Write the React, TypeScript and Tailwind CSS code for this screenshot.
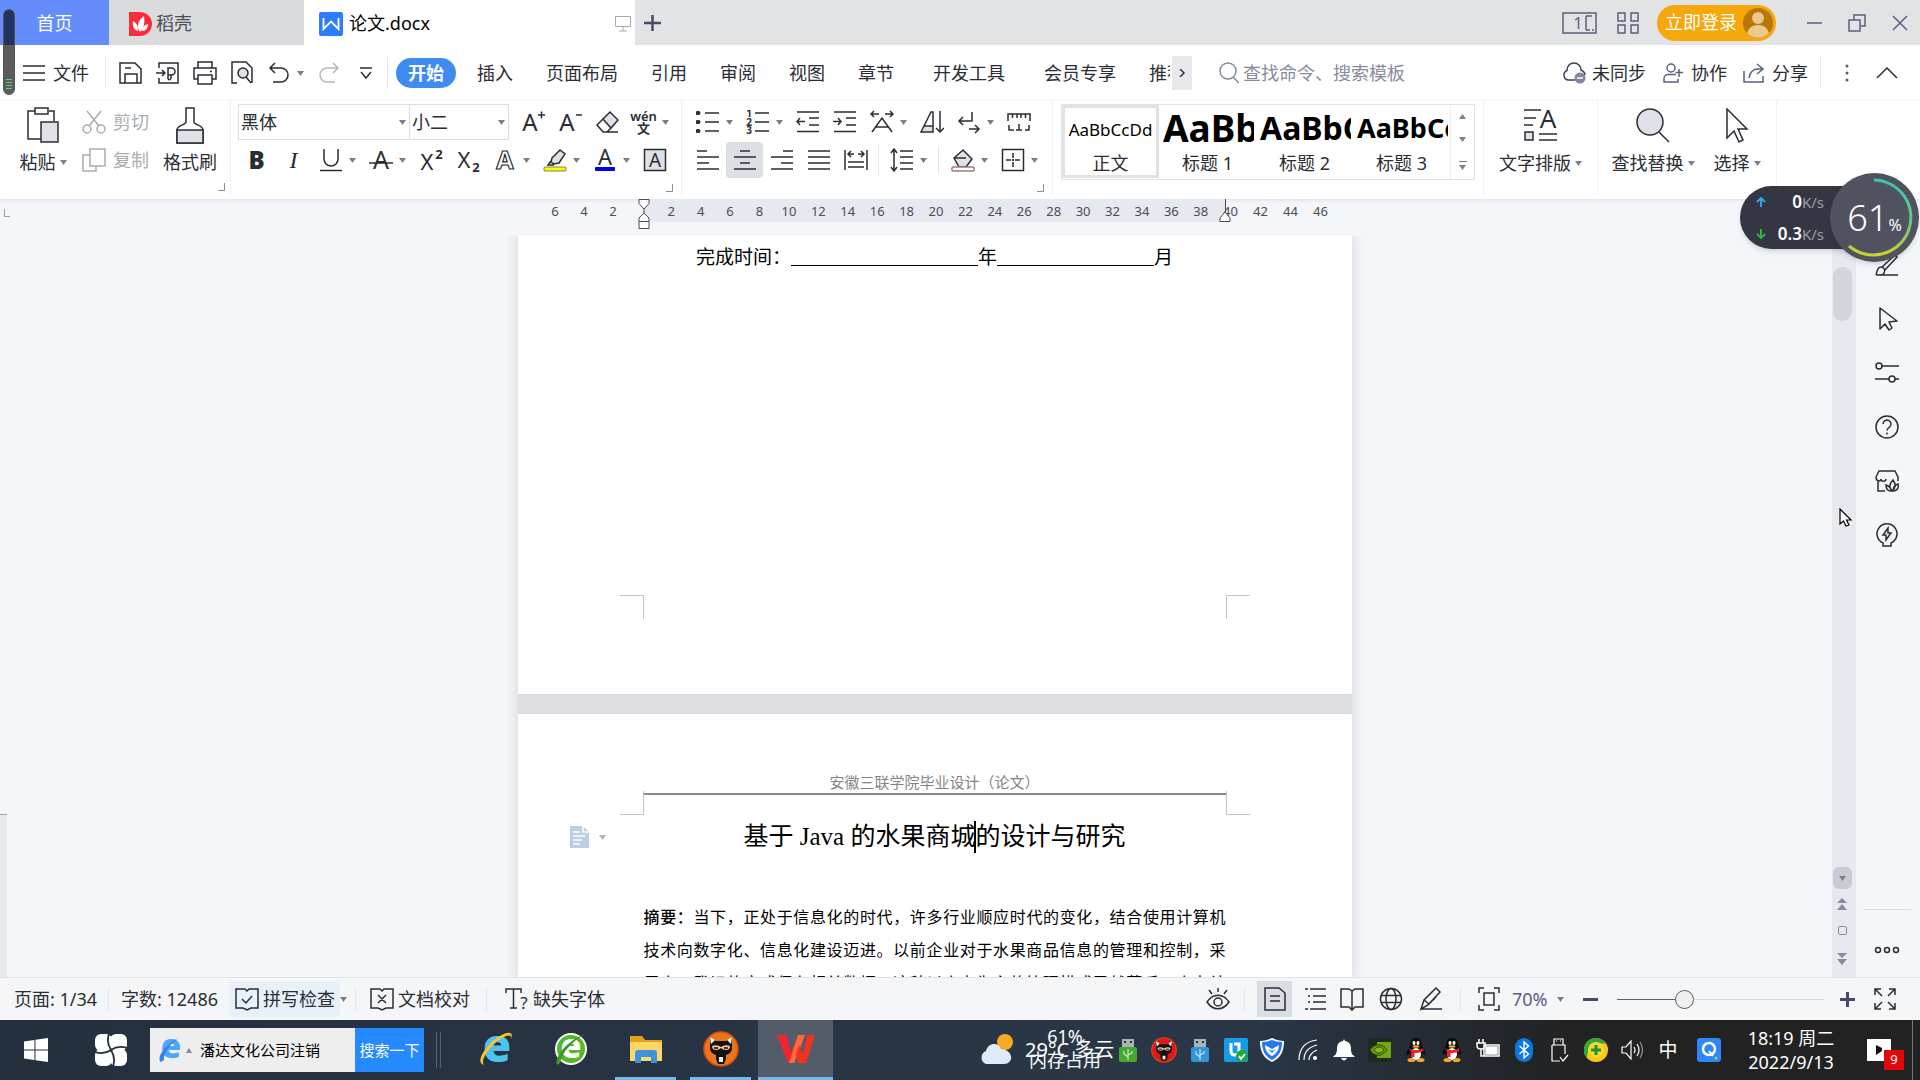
import React from 'react';

interface IcoProps {
  w?: number;
  h?: number;
  vb?: string;
  className?: string;
  sw?: number;
  children: React.ReactNode;
}

function Ico({ w = 24, h = 24, vb, className = '', sw = 1.5, children }: IcoProps) {
  return (
    <svg
      width={w}
      height={h}
      viewBox={vb || `0 0 ${w} ${h}`}
      className={`shrink-0 ${className}`}
      fill="none"
      stroke="currentColor"
      strokeWidth={sw}
      aria-hidden="true"
    >
      {children}
    </svg>
  );
}

function Caret({ className = '' }: { className?: string }) {
  return (
    <svg width="7" height="5" viewBox="0 0 7 5" className={`shrink-0 fill-[#7c7f87] ${className}`} aria-hidden="true">
      <path d="M0 0h7L3.500 5z" />
    </svg>
  );
}

function Tool({ label, active, drop, children }: { label: string; active?: boolean; drop?: boolean; children: React.ReactNode }) {
  return (
    <>
      <button
        aria-label={label}
        className={`flex h-9 w-[37px] shrink-0 items-center justify-center rounded-sm ${active ? 'bg-[#dcdfe6]' : ''}`}
      >
        {children}
      </button>
      {drop && (
        <button aria-label={`${label} 更多`} className="flex h-9 w-[13px] shrink-0 items-center">
          <Caret />
        </button>
      )}
    </>
  );
}

function Letter({ x = 12, y = 20, size = 22, weight = 400, fill = 'currentColor', children }: { x?: number; y?: number; size?: number; weight?: number; fill?: string; children: string }) {
  return (
    <text x={x} y={y} fontSize={size} fontWeight={weight} textAnchor="middle" fill={fill} stroke="none">
      {children}
    </text>
  );
}

function Divider({ className = '' }: { className?: string }) {
  return <div className={`w-px shrink-0 bg-[#e6e7ea] ${className}`} />;
}

function Launcher() {
  return (
    <Ico w={8} h={8} sw={1} className="self-end text-[#8a8d94]">
      <path d="M7.500 0v7.500H1" />
    </Ico>
  );
}

function TitleBar() {
  return (
    <header className="flex h-[45px] shrink-0 items-stretch bg-[#e1e3e5]">
      <button className="w-[109px] bg-[#648dfb] pt-0.5 text-white">首页</button>
      <button className="flex w-[195px] items-center gap-1 bg-[#dadbde] pl-5 pt-0.5 text-[#4b4e57]">
        <svg width="23" height="24" viewBox="0 0 23 24" aria-hidden="true">
          <path d="M0 0h11a12 12 0 0 1 0 24H0z" fill="#fb2b3a" />
          <path d="M11 20C7 15 9 8 15 4c1 7 0 12-4 16zM9 19c-4-1-6-5-5-10 4 2 5 5 5 10zM13 19c0-3 2-6 6-7 0 4-2 7-6 7z" fill="#fff" />
        </svg>
        稻壳
      </button>
      <div className="flex w-[331px] items-center bg-white pl-[15px] pr-1 pt-0.5">
        <svg width="24" height="24" viewBox="0 0 24 24" aria-hidden="true">
          <rect width="24" height="24" rx="2" fill="#2f7df6" />
          <path d="M4.500 6v11L12 9.500 19.500 17V6" fill="none" stroke="#fff" strokeWidth="1.800" />
        </svg>
        <button className="ml-1.5 flex-1 text-left text-black">论文.docx</button>
        <Ico w={16} h={17} sw={1} className="text-[#a5a9b3]">
          <path d="M.5 1.500h15v10H.5zM8 11.500V16M4 16h8" />
        </Ico>
      </div>
      <button aria-label="新建" className="flex w-[35px] items-center justify-center text-[#454d66]">
        <Ico w={17} h={18} sw={2.500}>
          <path d="M8.500 1v16M0 9h17" />
        </Ico>
      </button>
      <div className="flex flex-1 items-center justify-end text-[#5a6080]">
        <button aria-label="窗口" className="mr-5">
          <Ico w={35} h={22} sw={1.500}>
            <path d="M1 1h33v20H1zM24 4v14M24 4h6M24 18h4M30 18h2" />
            <Letter x={16} y={17} size={16}>1</Letter>
          </Ico>
        </button>
        <button aria-label="应用" className="mr-[18px]">
          <Ico w={22} h={22}>
            <path d="M1 1h7v8H1zM14 1h7v8h-7zM1 13h7v8H1zM14 13h7v8h-7z" />
          </Ico>
        </button>
        <button className="flex h-9 w-[119px] items-center justify-between rounded-full bg-[#f5a70c] pl-2 pr-[3px] text-white">
          立即登录
          <svg width="30" height="30" viewBox="0 0 30 30" aria-hidden="true">
            <circle cx="15" cy="15" r="15" fill="#b97708" />
            <circle cx="15" cy="10" r="6" fill="#ecc88c" />
            <path d="M4 25c2-6 6-8 11-8s9 2 11 8a15 15 0 0 1-22 0z" fill="#ecc88c" />
          </svg>
        </button>
        <Divider className="ml-3 h-7" />
        <button aria-label="最小化" className="ml-[18px]">
          <Ico w={15} h={18}><path d="M0 9h15" /></Ico>
        </button>
        <button aria-label="还原" className="ml-[26px]">
          <Ico w={18} h={18}><path d="M1 6h11v11H1zM6 6V1h11v11h-5" /></Ico>
        </button>
        <button aria-label="关闭" className="ml-[26px] mr-3">
          <Ico w={16} h={16}><path d="M1 1l14 14M15 1L1 15" /></Ico>
        </button>
      </div>
    </header>
  );
}

function MenuBar() {
  return (
    <nav className="flex h-14 shrink-0 items-center bg-white pl-[23px]">
      <button className="flex items-center gap-2">
        <Ico w={22} h={16}><path d="M0 1h22M0 8h22M0 15h22" /></Ico>
        文件
      </button>
      <Divider className="ml-4 mr-1.5 h-8" />
      <Tool label="保存">
        <Ico><path d="M1 2h15l6 6v14H1zM6 22v-9h12v9M6 7h6" /></Ico>
      </Tool>
      <Tool label="输出为PDF">
        <Ico><path d="M3 7V2h19v20H3v-5M0 12h9M6 9l3 3-3 3M12 18V7h3.500a3.500 3.500 0 0 1 0 7H12M12 18c2 2 4-1 3-4" /></Ico>
      </Tool>
      <Tool label="打印">
        <Ico><path d="M5 7V1h14v6M5 18H1V7h22v11h-4M5 14h14v9H5zM17 10.500h2" /></Ico>
      </Tool>
      <Tool label="打印预览">
        <Ico>
          <path d="M7 22H2V1h14l6 6v15" />
          <circle cx="13" cy="12" r="5" fill="#dfe1e6" />
          <path d="M16 16l5 6" />
        </Ico>
      </Tool>
      <Tool label="撤销" drop>
        <Ico><path d="M8 2L3 7l5 5M3 7h11a7 7 0 0 1 0 14H6" /></Ico>
      </Tool>
      <div className="flex text-[#b4b7bd]">
        <Tool label="恢复">
          <Ico><path d="M16 2l5 5-5 5M21 7H10a7 7 0 0 0 0 14h8" /></Ico>
        </Tool>
      </div>
      <Tool label="自定义">
        <Ico w={12} h={12}><path d="M0 1h12M1 5l5 6 5-6" /></Ico>
      </Tool>
      <Divider className="ml-[3px] h-8" />
      <button className="ml-2 h-[30px] w-[60px] shrink-0 rounded-full bg-[#3f8cf0] font-bold text-white">开始</button>
      <div className="ml-[21px] flex shrink-0 gap-[33px] whitespace-nowrap">
        <button>插入</button>
        <button>页面布局</button>
        <button>引用</button>
        <button>审阅</button>
        <button>视图</button>
        <button>章节</button>
        <button className="mx-1.5">开发工具</button>
        <button>会员专享</button>
        <button className="w-[21px] overflow-hidden text-left">推荐</button>
      </div>
      <button aria-label="更多选项卡" className="ml-0.5 flex h-[34px] w-5 shrink-0 items-center justify-center bg-[#e8e9ec]">
        <Ico w={6} h={8}><path d="M1 0l4 4-4 4" /></Ico>
      </button>
      <label className="ml-[27px] flex shrink-0 items-center gap-1 text-[#878b9b]">
        <Ico w={20} h={22}>
          <circle cx="9" cy="9" r="8" />
          <path d="M14 15l6 6" />
        </Ico>
        <input aria-label="搜索" placeholder="查找命令、搜索模板" className="w-[180px] outline-none placeholder:text-[#878b9b]" />
      </label>
      <div className="flex flex-1 items-center justify-end whitespace-nowrap">
        <button className="flex items-center gap-1.5">
          <Ico w={24} h={22} className="text-[#3d4152]">
            <path d="M13 18H6a5 5 0 0 1-1-9.500C5 4 8 1 12 1s7 3 7 7c2 1 4 2 4 5" />
            <circle cx="18" cy="16" r="5.500" fill="#8288a3" stroke="none" />
            <path d="M15 16h6" stroke="#fff" />
          </Ico>
          未同步
        </button>
        <button className="ml-[17px] flex items-center gap-2">
          <Ico w={20} h={20} className="text-[#5a6080]">
            <circle cx="8" cy="5" r="4" />
            <path d="M13 11.500H5a4 4 0 0 0-4 4V19h14v-3M16 6v8M12.500 9.500H20" />
          </Ico>
          协作
        </button>
        <button className="ml-4 flex items-center gap-[7px]">
          <Ico w={22} h={20} className="text-[#5a6080]">
            <path d="M1 8v11h19v-6M14 1l6 5-6 5M20 6h-5c-5 0-8 3-9 9" />
          </Ico>
          分享
        </button>
        <Divider className="ml-3 h-8" />
        <button aria-label="更多" className="ml-6">
          <svg width="4" height="18" viewBox="0 0 4 18" fill="#5a5d66" aria-hidden="true">
            <circle cx="2" cy="2" r="1.500" /><circle cx="2" cy="9" r="1.500" /><circle cx="2" cy="16" r="1.500" />
          </svg>
        </button>
        <button aria-label="收起功能区" className="ml-[27px] mr-[22px]">
          <Ico w={22} h={12}><path d="M1 11L11 1l10 10" /></Ico>
        </button>
      </div>
    </nav>
  );
}

function BigTool({ label, className, children }: { label: string; className: string; children: React.ReactNode }) {
  return (
    <button className={`flex h-[67px] shrink-0 flex-col items-center justify-between whitespace-nowrap ${className}`}>
      {children}
      <span className="flex items-center gap-1 leading-6">
        {label}
        <Caret />
      </span>
    </button>
  );
}

const styles = [
  { name: '标题 1', size: 'text-[37px]' },
  { name: '标题 2', size: 'text-[32px]' },
  { name: '标题 3', size: 'text-[27px]' },
];

function Ribbon() {
  return (
    <section className="flex h-[98px] shrink-0 bg-white shadow-[0_1px_4px_#dcdee2]">
      <div className="flex w-[230px] shrink-0 pl-3 pt-1.5">
        <BigTool label="粘贴" className="w-[62px]">
          <Ico w={32} h={36}>
            <path d="M8 4H1v28h13M22 4h5v10M8 1h13v6H8z" />
            <path d="M14 15h17v20H14z" fill="#dfe1e6" />
          </Ico>
        </BigTool>
        <div className="-mt-[3px] ml-2 flex flex-col gap-[2px] text-[#a9acb3]">
          <button className="flex h-9 items-center gap-[7px]">
            <Ico><circle cx="5" cy="19" r="4" /><circle cx="19" cy="19" r="4" /><path d="M7 16L19 1M17 16L5 1" /></Ico>
            剪切
          </button>
          <button className="flex h-9 items-center gap-[7px]">
            <Ico><path d="M8 1h15v17H8zM8 7H1v16h13v-5" /></Ico>
            复制
          </button>
        </div>
        <button className="ml-3.5 flex h-[67px] flex-col items-center justify-between">
          <Ico w={28} h={37}>
            <path d="M10 1h8v14c0 3 9 3 9 8v13H1V23c0-5 9-5 9-8z" />
            <path d="M1 23h26v13H1z" fill="#dfe1e6" />
          </Ico>
          <span className="leading-6">格式刷</span>
        </button>
        <div className="flex pb-2"><Launcher /></div>
      </div>
      <Divider className="h-[94px] opacity-60" />
      <div className="flex w-[450px] shrink-0 flex-col gap-[2px] pl-[7px] pt-[3px]">
        <div className="flex items-center">
          <div className="relative w-[172px]">
            <select aria-label="字体" className="h-9 w-full appearance-none border border-[#dcdee3] pl-0.5 outline-none">
              <option>黑体</option>
            </select>
            <Caret className="pointer-events-none absolute right-1 top-4" />
          </div>
          <div className="relative w-[99px]">
            <select aria-label="字号" className="h-9 w-full appearance-none border border-l-0 border-[#dcdee3] pl-0.5 outline-none">
              <option>小二</option>
            </select>
            <Caret className="pointer-events-none absolute right-1 top-4" />
          </div>
          <div className="flex pl-[5px]">
            <Tool label="增大字号">
              <Ico><Letter x={9} y={21} size={24}>A</Letter><path d="M17 5h7M20.500 1.500v7" /></Ico>
            </Tool>
            <Tool label="减小字号">
              <Ico><Letter x={9} y={21} size={24}>A</Letter><path d="M18 5h6" /></Ico>
            </Tool>
            <Tool label="清除格式">
              <Ico><path d="M8 9l7-7 8 8-7 8z" fill="#dfe1e6" /><path d="M8 9l-6 6 6 7h4l4-4M8 22h15" /></Ico>
            </Tool>
            <Tool label="拼音指南" drop>
              <span className="flex flex-col items-center text-[13px] font-semibold leading-3"><span>wén</span><span>文</span></span>
            </Tool>
          </div>
        </div>
        <div className="flex">
          <Tool label="加粗"><span className="text-2xl font-black">B</span></Tool>
          <Tool label="倾斜"><span className="font-['Liberation_Serif'] text-2xl italic">I</span></Tool>
          <Tool label="下划线" drop>
            <Ico><path d="M5 1v10a7 7 0 0 0 14 0V1M1 22.500h22" /></Ico>
          </Tool>
          <Tool label="删除线" drop>
            <Ico><Letter y={21} size={25}>A</Letter><path d="M0 15h24" /></Ico>
          </Tool>
          <Tool label="上标">
            <Ico w={26}><Letter x={9} y={22}>X</Letter><Letter x={21} y={11} size={13} weight={700}>2</Letter></Ico>
          </Tool>
          <Tool label="下标">
            <Ico w={26}><Letter x={9} y={20}>X</Letter><Letter x={21} y={24} size={13} weight={700}>2</Letter></Ico>
          </Tool>
          <Tool label="文字效果" drop>
            <Ico>
              <text x="12" y="21" fontSize="25" fontWeight="700" textAnchor="middle" fill="#fff" strokeWidth="1.200">A</text>
            </Ico>
          </Tool>
          <Tool label="突出显示" drop>
            <Ico>
              <path d="M9 10l8-8 5 4-6 9-5 1-3-2zM8 13l-3 4h6" fill="#dfe1e6" />
              <rect x="1" y="19" width="22" height="4" rx="1" fill="#ff0" strokeWidth=".6" />
            </Ico>
          </Tool>
          <Tool label="字体颜色" drop>
            <Ico><Letter y={17} size={22}>A</Letter><rect x="2" y="19" width="20" height="4" rx="1" fill="#00e" stroke="none" /></Ico>
          </Tool>
          <Tool label="字符底纹">
            <Ico><path d="M1.500 1.500h21v21h-21z" fill="#dfe1e6" /><Letter y={19} size={19}>A</Letter></Ico>
          </Tool>
        </div>
        <div className="flex h-3 justify-end pr-2"><Launcher /></div>
      </div>
      <Divider className="h-[94px] opacity-60" />
      <div className="flex w-[370px] shrink-0 flex-col gap-[2px] pl-[7px] pt-[3px]">
        <div className="flex">
          <Tool label="项目符号" drop>
            <Ico><path d="M9 3h14M9 12h14M9 21h14" /><path d="M1.500 3h1M1.500 12h1M1.500 21h1" strokeWidth="4" strokeLinecap="round" /></Ico>
          </Tool>
          <Tool label="编号" drop>
            <Ico>
              <path d="M9 3h14M9 12h14M9 21h14" />
              <Letter x={3} y={7} size={10} weight={700}>1</Letter>
              <Letter x={3} y={16} size={10} weight={700}>2</Letter>
              <Letter x={3} y={24} size={10} weight={700}>3</Letter>
            </Ico>
          </Tool>
          <Tool label="减少缩进"><Ico><path d="M1 2h22M13 8h10M13 15h10M1 21.500h22M1 11.500h8M4 8l-3 3.500L4 15" /></Ico></Tool>
          <Tool label="增加缩进"><Ico><path d="M1 2h22M13 8h10M13 15h10M1 21.500h22M0 11.500h8M5 8l3 3.500L5 15" /></Ico></Tool>
          <Tool label="中文版式" drop>
            <Ico><path d="M2 22L12 8l10 14M6 17h12M1 4h8M4 1L1 4l3 3M23 4h-8M20 1l3 3-3 3" /></Ico>
          </Tool>
          <Tool label="排序">
            <Ico><path d="M4 17h9v5H2z" fill="#dfe1e6" stroke="none" /><path d="M1 22L11 2h2v20zM4 16h9M20 1v21M16 18l4 4 4-4" /></Ico>
          </Tool>
          <Tool label="显示段落标记" drop>
            <Ico><path d="M15 2v9H2M6 7l-4 4 4 4M12 19h10M18 15l4 4-4 4" /></Ico>
          </Tool>
          <Tool label="制表位">
            <Ico><path d="M1 11V4h22v7M5.500 4v4M10 4v4M14 4v4M18.500 4v4M2 15v5h5M12 14v6M9 20h6M22 15v5h-4" /></Ico>
          </Tool>
        </div>
        <div className="flex items-center">
          <Tool label="左对齐"><Ico><path d="M1 3h10M1 9h22M1 15h12M1 21h22" /></Ico></Tool>
          <Tool label="居中对齐" active><Ico><path d="M7 3h10M1 9h22M7 15h10M1 21h22" /></Ico></Tool>
          <Tool label="右对齐"><Ico><path d="M13 3h10M1 9h22M11 15h12M1 21h22" /></Ico></Tool>
          <Tool label="两端对齐"><Ico><path d="M1 3h22M1 9h22M1 15h22M1 21h22" /></Ico></Tool>
          <Tool label="分散对齐"><Ico><path d="M1 2v20M23 2v20M4 14h16M4 19h16M4 6h6M14 6h6M7 3L4 6l3 3M17 3l3 3-3 3" /></Ico></Tool>
          <Divider className="mx-1 h-7" />
          <Tool label="行距" drop><Ico><path d="M10 3h13M10 9h13M10 15h13M10 21h13M4 1v22M1 5l3-4 3 4M1 19l3 4 3-4" /></Ico></Tool>
          <Divider className="mx-[5px] h-7" />
          <Tool label="底纹颜色" drop>
            <Ico>
              <path d="M3 10l9-8 9 9-6 8H8z" fill="#dfe1e6" />
              <path d="M3 10h12" />
              <rect x="1" y="19" width="22" height="4" rx="1" fill="#fff" stroke="#9a7d7d" />
            </Ico>
          </Tool>
          <Tool label="边框" drop>
            <Ico><path d="M1.500 1.500h21v21h-21z" /><path d="M12 5v14M5 12h14" strokeDasharray="5 1 2 1" /></Ico>
          </Tool>
        </div>
        <div className="flex h-3 justify-end pr-2"><Launcher /></div>
      </div>
      <Divider className="h-[94px] opacity-60" />
      <div className="ml-2 mt-[3px] flex h-[76px] w-[414px] shrink-0 border border-[#e2e4e8]">
        <button className="flex h-[73px] w-[97px] shrink-0 flex-col items-center justify-between overflow-hidden border-3 border-[#e0e2e6] text-black">
          <span className="flex h-11 items-center text-[17px]">AaBbCcDd</span>
          <span className="leading-6 text-[#2b2d35]">正文</span>
        </button>
        {styles.map((s) => (
          <button key={s.name} className="flex h-[73px] w-[97px] shrink-0 flex-col pb-[3px] text-black">
            <span className={`ml-1 flex h-[46px] w-[91px] items-center overflow-hidden font-bold ${s.size}`}>AaBbCc</span>
            <span className="w-full leading-6 text-[#2b2d35]">{s.name}</span>
          </button>
        ))}
        <div className="flex flex-1 flex-col items-center justify-around border-l border-[#eceef1]">
          <button aria-label="上一行" className="rotate-180"><Caret /></button>
          <button aria-label="下一行"><Caret /></button>
          <button aria-label="全部样式" className="flex flex-col items-center gap-[3px]"><span className="h-px w-2 bg-[#7c7f87]" /><Caret /></button>
        </div>
      </div>
      <Divider className="ml-2 h-[94px] opacity-60" />
      <div className="flex pt-[7px]">
        <BigTool label="文字排版" className="w-[113px]">
          <Ico w={35} h={34}>
            <path d="M1 2h17M1 10h12M1 17h9M16 26h18M16 32h18" />
            <path d="M2 24h8v8H2z" fill="#dfe1e6" />
            <Letter x={25} y={20} size={26}>A</Letter>
          </Ico>
        </BigTool>
        <Divider className="-mt-[7px] h-[94px] opacity-60" />
        <BigTool label="查找替换" className="w-[110px]">
          <Ico w={34} h={35}>
            <circle cx="14" cy="14" r="13" fill="#dfe1e6" />
            <path d="M23 24l10 10" />
          </Ico>
        </BigTool>
        <BigTool label="选择" className="w-[58px]">
          <Ico w={24} h={35}><path d="M2 1v29l7-7 5 11 4-2-5-11h9z" /></Ico>
        </BigTool>
        <Divider className="-mt-[7px] ml-2.5 h-[94px] opacity-60" />
      </div>
    </section>
  );
}

const inner = Array.from({ length: 19 }, (_, i) => (i + 1) * 2);

function Ruler() {
  return (
    <div className="flex h-[37px] shrink-0 justify-center pl-[37px] text-[13px] leading-6 text-[#4a4d57]">
      <div className="relative flex w-[834px]">
        <div className="flex w-[126px] justify-end pr-4">
          {[6, 4, 2].map((n) => <span key={n} className="w-[29px] text-center">{n}</span>)}
        </div>
        <div className="flex h-[23px] flex-1 bg-[#e7e9f1] pl-[13px] pr-[10px]">
          {inner.map((n) => <span key={n} className="flex-1 text-center">{n}</span>)}
        </div>
        <div className="flex w-[126px]">
          {[40, 42, 44, 46].map((n) => <span key={n} className="w-[30px] shrink-0 text-center first:-ml-2.5">{n}</span>)}
        </div>
        <Ico w={12} h={30} sw={1} className="absolute left-[120px] top-0">
          <path d="M1 .5h10v4L6 10 1 4.500zM6 10v4l5 5v3.500H1V19l5-5M1 22.500h10v7H1z" fill="#fff" />
        </Ico>
        <Ico w={12} h={24} sw={1} className="absolute right-[121px] top-0">
          <path d="M6.500 0v14" /><path d="M6 13l5 6v3.500H1V19z" fill="#fff" />
        </Ico>
      </div>
    </div>
  );
}

const abstractLines = [
  '技术向数字化、信息化建设迈进。以前企业对于水果商品信息的管理和控制，采',
  '用人工登记的方式保存相关数据，这种以人力为主的管理模式已然落后，人力结',
];

function Documents() {
  return (
    <div className="flex min-h-0 flex-1 justify-center overflow-hidden pl-[37px]">
      <div className="flex w-[834px] flex-col gap-5 bg-[#dcdee1] text-black shadow-[0_0_10px_3px_#dcdee1]">
        <article className="flex h-[458px] shrink-0 flex-col justify-between bg-white pb-[75px] pt-1.5">
          <div className="flex justify-center text-[19px] leading-[30px]">
            <span>完成时间：</span>
            <span className="h-6 w-[187px] border-b border-black" />
            <span>年</span>
            <span className="h-6 w-[157px] border-b border-black" />
            <span>月</span>
          </div>
          <div className="flex justify-between px-[102px]">
            <div className="size-6 border-r border-t border-[#c4c4c4]" />
            <div className="size-6 border-l border-t border-[#c4c4c4]" />
          </div>
        </article>
        <article className="flex-1 overflow-hidden bg-white pt-[57px]">
          <div className="mx-[126px] border-b-2 border-[#8b8b8b] text-center text-[15px] leading-[22px] text-[#858585]">安徽三联学院毕业设计（论文）</div>
          <div className="-mt-1 flex justify-between px-[102px]">
            <div className="size-6 border-b border-r border-[#c4c4c4]" />
            <div className="size-6 border-b border-l border-[#c4c4c4]" />
          </div>
          <div className="mt-1.5 flex items-center px-[52px]">
            <button aria-label="段落选项" className="flex w-[60px] items-center gap-2.5">
              <svg width="19" height="22" viewBox="0 0 19 22" aria-hidden="true">
                <path d="M0 0h13l6 6v16H0z" fill="#bccde6" />
                <path d="M3 6h7M3 10h12M3 14h9M3 18h7M13 0v6h6" fill="none" stroke="#fff" strokeWidth="1.500" />
              </svg>
              <Caret className="opacity-60" />
            </button>
            <h1 className="flex-1 text-center font-['Liberation_Serif','Noto_Sans_CJK_SC',serif] text-[25px] leading-8">
              基于 Java 的水果商城<span className="-mx-px inline-block h-8 w-0.5 bg-black align-top" />的设计与研究
            </h1>
            <div className="w-[60px]" />
          </div>
          <div className="mx-[126px] mt-12 text-[16px] leading-[33px]">
            <p className="[text-align-last:justify]"><span className="font-medium">摘要：</span>当下，正处于信息化的时代，许多行业顺应时代的变化，结合使用计算机</p>
            {abstractLines.map((l) => <p key={l} className="[text-align-last:justify]">{l}</p>)}
          </div>
        </article>
      </div>
    </div>
  );
}

function ScrollRail() {
  return (
    <div className="mt-[37px] flex w-6 shrink-0 flex-col items-center bg-[#e8e9ef] pb-3 pr-1 pt-[31px]">
      <div className="h-[54px] w-[19px] rounded-full bg-[#d3d5da]" />
      <div className="flex-1" />
      <button aria-label="向下滚动" className="flex h-[22px] w-[19px] items-center justify-center rounded-md bg-[#c9cbd4]"><Caret /></button>
      <button aria-label="上一页" className="mt-[9px] flex">
        <svg width="10" height="12" viewBox="0 0 10 12" fill="#868aa3" aria-hidden="true"><path d="M0 5h10L5 0zM0 12h10L5 6z" /></svg>
      </button>
      <button aria-label="选择浏览对象" className="mb-[18px] mt-4 size-[9px] rounded-xs border border-[#868aa3]" />
      <button aria-label="下一页" className="flex">
        <svg width="10" height="12" viewBox="0 0 10 12" fill="#868aa3" aria-hidden="true"><path d="M0 0h10L5 5zM0 6h10l-5 6z" /></svg>
      </button>
    </div>
  );
}

function SideBar() {
  return (
    <aside className="flex w-16 shrink-0 flex-col items-center gap-[30px] pb-[17px] pr-0.5 pt-[54px]">
      <button aria-label="样式" className="flex"><Ico><path d="M1 22h22M1 22c1-3 1-8 5-8 5 0 5 8-1 8M7 14L20 2l2 2L10 17" /></Ico></button>
      <button aria-label="选择" className="flex"><Ico><path d="M5 1v21l5-5 4 6 3-2-3-6 8-1z" strokeLinejoin="round" /></Ico></button>
      <button aria-label="属性" className="flex"><Ico><circle cx="4" cy="5" r="3" /><circle cx="17" cy="18" r="3" /><path d="M7 5h17M0 18h14M20 18h4" /></Ico></button>
      <button aria-label="帮助" className="flex">
        <Ico><circle cx="12" cy="12" r="11" /><path d="M8 9a4 4 0 1 1 6 3.500c-1.500 1-2 1.500-2 3M12 17.500v2" /></Ico>
      </button>
      <button aria-label="稻壳资源" className="flex">
        <Ico>
          <path d="M3 11v11h7M1 8l3-6h16l3 6v4M1 8c0 5 5 5 5 2 0 3 5 3 5 0" />
          <path d="M17 22c-3-3-3-7 1-11 3 4 3 8-1 11zM16 22c-4 0-5-3-5-6 3 1 5 3 5 6zM18 22c0-4 2-6 5-7 1 4-1 7-5 7z" />
        </Ico>
      </button>
      <button aria-label="智能助手" className="flex"><Ico><path d="M8 20a10 10 0 1 1 8 0v3H8zM13 5l-5 7h3v5l5-7h-3z" /></Ico></button>
      <div className="flex-1" />
      <div className="h-px w-12 bg-[#dcdee2]" />
      <button aria-label="更多" className="flex h-5 items-center">
        <Ico w={26} h={8} sw={1.500}><circle cx="4" cy="4" r="2.500" /><circle cx="13" cy="4" r="2.500" /><circle cx="22" cy="4" r="2.500" /></Ico>
      </button>
    </aside>
  );
}

function StatusBar() {
  return (
    <footer className="flex h-[43px] shrink-0 items-center whitespace-nowrap border-t border-[#e0e2e5] bg-[#f4f6f8] pl-3.5">
      <button className="w-[86px] text-left">页面: 1/34</button>
      <Divider className="ml-2 mr-3 h-6" />
      <button className="w-[101px] text-left">字数: 12486</button>
      <button className="ml-[7px] flex h-9 w-[111px] items-center gap-1 bg-[#e8f1fa] pl-1.5">
        <Ico><path d="M10 2H1v19h7l4 2 4-2h7V2h-9l-2 2zM7 12l4 4 6-7" /></Ico>
        拼写检查
      </button>
      <Caret />
      <Divider className="ml-2 mr-3.5 h-6" />
      <button className="flex items-center gap-1">
        <Ico><path d="M10 2H1v19h7l4 2 4-2h7V2h-9l-2 2zM8 8l8 8M16 8l-8 8" /></Ico>
        文档校对
      </button>
      <Divider className="ml-4 mr-[18px] h-6" />
      <button className="flex items-center gap-1">
        <Ico><path d="M1 6V2h15v4M8.500 2v19M5 21h7" /><Letter x={19} y={22} size={17}>?</Letter></Ico>
        缺失字体
      </button>
      <div className="flex flex-1 items-center justify-end">
        <button aria-label="护眼模式">
          <Ico><path d="M1 15c6-9 16-9 22 0-6 9-16 9-22 0zM12 1v4M3 3l3 4M21 3l-3 4" /><circle cx="12" cy="15" r="4" /></Ico>
        </button>
        <Divider className="ml-3.5 mr-3 h-6" />
        <button aria-label="页面视图" className="flex h-9 w-[35px] items-center justify-center bg-[#dadde3]">
          <Ico w={22}><path d="M1 1h14l6 5v17H1zM6 9h10M6 14h10" /></Ico>
        </button>
        <button aria-label="大纲" className="ml-3">
          <Ico w={22}><path d="M6 2h16M9 9h13M9 15h13M6 22h16M1 2h3M4 9h2M4 15h2M1 22h3" /></Ico>
        </button>
        <button aria-label="阅读版式" className="ml-3.5">
          <Ico><path d="M12 4l-3-2H1v18h8l3 3 3-3h8V2h-8zM12 4v18" /></Ico>
        </button>
        <button aria-label="Web版式" className="ml-[15px]">
          <Ico><circle cx="12" cy="12" r="10.500" /><ellipse cx="12" cy="12" rx="5" ry="10.500" /><path d="M2 8.500h20M2 15.500h20" /></Ico>
        </button>
        <button aria-label="写作模式" className="ml-4">
          <Ico><path d="M2 22l3-9L17 1l4 4L9 18zM2 22h21M5 13l5 4M9 18l8-8" /></Ico>
        </button>
        <Divider className="mx-[17px] h-6" />
        <button aria-label="适合页面">
          <Ico w={22}><path d="M1 6V1h5M16 1h5v5M21 18v5h-5M6 23H1v-5M6 6h10v12H6z" /></Ico>
        </button>
        <button className="ml-3 flex w-[52px] items-center justify-between text-[#5a6080]">70%<Caret /></button>
        <button aria-label="缩小" className="ml-[19px] h-[3px] w-[15px] bg-[#454d66]" />
        <input
          type="range"
          aria-label="显示比例"
          min={0}
          max={100}
          defaultValue={31}
          className="ml-[19px] h-5 w-[207px] appearance-none bg-[linear-gradient(to_right,#5a6080_32%,#d3d6dc_32%)] bg-[length:100%_1px] bg-center bg-no-repeat [&::-webkit-slider-thumb]:size-[19px] [&::-webkit-slider-thumb]:appearance-none [&::-webkit-slider-thumb]:rounded-full [&::-webkit-slider-thumb]:border [&::-webkit-slider-thumb]:border-[#5a5d66] [&::-webkit-slider-thumb]:bg-[#f0f0f1]"
        />
        <button aria-label="放大" className="ml-4 text-[#454d66]"><Ico w={15} h={15} sw={3}><path d="M7.500 0v15M0 7.500h15" /></Ico></button>
        <button aria-label="全屏" className="ml-[19px] mr-6">
          <Ico w={22} h={22}><path d="M1 7V1h6M1 1l7 7M15 1h6v6M21 1l-7 7M21 15v6h-6M21 21l-7-7M7 21H1v-6M1 21l7-7" /></Ico>
        </button>
      </div>
    </footer>
  );
}

function Ninja({ w, h, fill }: { w: number; h: number; fill: string }) {
  return (
    <svg width={w} height={h} viewBox="0 0 36 36" aria-hidden="true">
      <circle cx="18" cy="18" r="17" fill={fill} stroke="#d84c10" strokeWidth="1.500" />
      <path d="M7 6l6 4h10l6-4v11c0 4-3 6-6 7v4l-2 5h-6l-2-5v-4c-3-1-6-3-6-7z" fill="#131313" />
      <path d="M7 6l5 3-4 4zM29 6l-5 3 4 4z" fill="#fff" />
      <path d="M9 15q5-2 9 1 4-3 9-1 0 4-4 4-3 0-5-2-2 2-5 2-4 0-4-4z" fill="#f7c28f" />
      <path d="M11 17h4M21 17h4" stroke="#111" strokeWidth="1.500" />
      <path d="M16 26h4v5h-4z" fill="#eee" />
    </svg>
  );
}

function Penguin() {
  return (
    <svg width="20" height="24" viewBox="0 0 20 24" aria-hidden="true">
      <ellipse cx="5.500" cy="22" rx="4" ry="2" fill="#f5a623" />
      <ellipse cx="14.500" cy="22" rx="4" ry="2" fill="#f5a623" />
      <path d="M10 0c-5 0-6 4-6 8-3 4-4 8-3 9l3-2c1 5 3 7 6 7s5-2 6-7l3 2c1-1 0-5-3-9 0-4-1-8-6-8z" fill="#0b0b0b" />
      <ellipse cx="10" cy="16" rx="5" ry="6" fill="#fff" />
      <ellipse cx="8" cy="5" rx="1.500" ry="2" fill="#fff" />
      <ellipse cx="12" cy="5" rx="1.500" ry="2" fill="#fff" />
      <ellipse cx="10" cy="8.500" rx="3.500" ry="1.200" fill="#f5a623" />
      <path d="M3 10c4 3 10 3 14 0l.5 3c-4 2-7 2-9 2v4H5v-5z" fill="#e8202a" />
    </svg>
  );
}

function UsbStick({ fill }: { fill: string }) {
  return (
    <svg width="20" height="24" viewBox="0 0 20 24" aria-hidden="true">
      <path d="M4 1h12v8H4z" fill="#aab3ba" />
      <path d="M6 3h2v2H6zM12 3h2v2h-2z" fill="#333" />
      <rect x="1" y="9" width="18" height="15" rx="2" fill={fill} />
      <path d="M10 11v11M10 19l-4-3v-3M10 17l4-2v-2" fill="none" stroke="#fff" strokeOpacity=".8" strokeWidth="1.100" />
    </svg>
  );
}

function Task({ label, state, children }: { label: string; state?: 'open' | 'active'; children: React.ReactNode }) {
  return (
    <button aria-label={label} className={`flex w-[75px] flex-col items-center ${state === 'active' ? 'bg-[#525d69]' : ''}`}>
      <span className="flex flex-1 items-center">{children}</span>
      <span className={`h-[3px] ${state === 'active' ? 'w-full bg-[#76b9ed]' : state === 'open' ? 'w-[61px] bg-[#76b9ed]' : 'w-0'}`} />
    </button>
  );
}

function TaskBar() {
  return (
    <footer className="flex h-[60px] shrink-0 items-stretch bg-[linear-gradient(to_right,#25303f_0%,#293747_65%,#222_82%)] text-white">
      <button aria-label="开始菜单" className="flex w-[72px] items-center justify-center">
        <svg width="24" height="24" viewBox="0 0 24 24" fill="#fff" aria-hidden="true">
          <path d="M0 3.500l10.500-1.500v9.500H0zM11.500 1.800L24 0v11.500H11.500zM0 12.500h10.500V22L0 20.500zM11.500 12.500H24V24l-12.500-1.800z" />
        </svg>
      </button>
      <button aria-label="小组件" className="flex w-[78px] items-center justify-center">
        <svg width="32" height="32" viewBox="0 0 32 32" aria-hidden="true">
          <g fill="#fff">
            <rect width="17" height="17" rx="6" />
            <rect x="15" width="17" height="17" rx="6" />
            <rect y="15" width="17" height="17" rx="6" />
            <rect x="15" y="15" width="17" height="17" rx="6" />
          </g>
          <path d="M14 0q-3 8 2 16M32 14q-9-3-16 2M18 32q3-8-2-16M0 18q9 3 16-2" fill="none" stroke="#25303f" strokeWidth="1.800" />
        </svg>
      </button>
      <form className="my-2 flex w-[274px] shrink-0">
        <label className="flex min-w-0 flex-1 items-center bg-[#eee] pl-2">
          <svg width="24" height="28" viewBox="0 0 24 28" aria-hidden="true">
            <text x="13" y="22" fontSize="33" fontWeight="800" textAnchor="middle" fill="#4fa5f7" className="font-['Open_Sans']">e</text>
            <path d="M3 26C-2 22 6 10 20 2 12 9 5 16 6 24z" fill="#2b83ec" />
          </svg>
          <svg width="6" height="5" viewBox="0 0 6 5" className="mx-1 shrink-0 fill-[#888]" aria-hidden="true"><path d="M0 5h6L3 0z" /></svg>
          <input aria-label="搜索内容" defaultValue="潘达文化公司注销" className="ml-1 w-[140px] bg-transparent text-[15px] text-black outline-none" />
        </label>
        <button type="button" className="w-[69px] bg-[#2589ff] text-[15px]">搜索一下</button>
      </form>
      <div className="my-3 ml-3 mr-[17px] w-[5px] border-x border-[#54606d]" />
      <Task label="Internet Explorer">
        <svg width="36" height="36" viewBox="0 0 36 36" aria-hidden="true">
          <text x="19" y="31" fontSize="46" fontWeight="800" textAnchor="middle" fill="#4cc3f1" className="font-['Open_Sans']">e</text>
          <path d="M6 34C-4 32 8 14 20 6 30 0 36 0 33 8c1-6-6-3-12 1C10 17 2 30 6 34z" fill="#f5c52b" />
        </svg>
      </Task>
      <Task label="360安全浏览器">
        <svg width="34" height="34" viewBox="0 0 34 34" aria-hidden="true">
          <circle cx="17" cy="17" r="16" fill="#fff" />
          <circle cx="17" cy="17" r="14" fill="#54b82c" />
          <text x="17" y="26" fontSize="34" fontWeight="800" textAnchor="middle" fill="#fff" className="font-['Open_Sans']">e</text>
          <path d="M3 33C0 26 12 9 31 2 18 10 8 20 6 31z" fill="#3f9b1e" />
        </svg>
      </Task>
      <Task label="文件资源管理器" state="open">
        <svg width="34" height="30" viewBox="0 0 34 30" aria-hidden="true">
          <path d="M1 2h12l3 4h17v7H1z" fill="#e0a21f" />
          <path d="M1 8h32v19H1z" fill="#fcd667" />
          <path d="M6 29V19q0-3 3-3h16q3 0 3 3v10h-6v-6H12v6z" fill="#3e94dc" />
        </svg>
      </Task>
      <Task label="潘达" state="open"><Ninja w={36} h={36} fill="#ee7419" /></Task>
      <Task label="WPS Office" state="active">
        <svg width="38" height="28" viewBox="0 0 38 28" aria-hidden="true">
          <path d="M0 0h9l5 17 7-17h6L17 28h-6z" fill="#f5242b" />
          <path d="M21 0h7l-7 19-4 9h-5z" fill="#fb6a3c" />
          <path d="M30 0h8l-9 28h-8l-2-9 3-9 4 9z" fill="#f2321f" />
        </svg>
      </Task>
      <div className="flex flex-1 justify-end">
        <button aria-label="天气" className="flex w-[34px] items-center">
          <svg width="34" height="32" viewBox="0 0 34 32" aria-hidden="true">
            <circle cx="26" cy="8" r="8" fill="#f9a825" />
            <path d="M7 30a7 7 0 0 1 0-13C9 8 20 8 22 15c13 1 13 15 3 15z" fill="#dfe9f7" />
          </svg>
        </button>
        <div className="relative flex w-[97px] items-center whitespace-nowrap pl-3 text-[20px]">
          29°C 多云
          <div className="absolute left-4 top-1 flex w-[72px] flex-col items-center text-[18px] leading-6">
            <span>61%</span>
            <span>内存占用</span>
          </div>
        </div>
        <ul className="flex items-center *:flex *:w-9 *:justify-center">
          <li><UsbStick fill="#43a92f" /></li>
          <li><Ninja w={26} h={26} fill="#e3151d" /></li>
          <li><UsbStick fill="#2f97d8" /></li>
          <li>
            <svg width="24" height="24" viewBox="0 0 24 24" aria-hidden="true">
              <rect width="24" height="24" rx="2" fill="#169be8" />
              <path d="M7 5v8q0 4 4 4t4-4V6h-5" fill="none" stroke="#fff" strokeWidth="3" />
              <circle cx="18" cy="18" r="6" fill="#19a83a" />
              <path d="M15 18l2 3 4-5" fill="none" stroke="#fff" strokeWidth="1.800" />
            </svg>
          </li>
          <li>
            <svg width="24" height="24" viewBox="0 0 24 24" aria-hidden="true">
              <path d="M12 0c4 2 8 3 12 3 0 10-3 17-12 21C3 20 0 13 0 3c4 0 8-1 12-3z" fill="#fff" />
              <path d="M12 2c3 1 6 2 10 2 0 9-3 14-10 18C5 18 2 13 2 4c4 0 7-1 10-2z" fill="#2478f0" />
              <path d="M5 7l7 4 7-4c0 5-3 9-7 11-4-2-7-6-7-11z" fill="#fff" /><path d="M8 11l4 2 4-2-4 4z" fill="#2478f0" />
            </svg>
          </li>
          <li><Ico w={20} h={22} sw={1.200}><path d="M1 21C1 9 8 2 19 1M6 21c0-8 5-13 13-15M11 21c0-5 3-8 8-10" /><circle cx="17" cy="19" r="1.500" fill="#fff" /></Ico></li>
          <li><svg width="22" height="22" viewBox="0 0 22 22" fill="#fff" aria-hidden="true"><path d="M11 0l1 2c5 1 6 4 6 8 0 5 2 6 4 8H0c2-2 4-3 4-8 0-4 1-7 6-8zM8 19h6q-3 5-6 0z" /></svg></li>
          <li>
            <svg width="24" height="24" viewBox="0 0 24 24" aria-hidden="true">
              <path d="M0 0h24v24H0z" fill="#1d2a1d" />
              <path d="M9 4h14v16H9z" fill="#76a80e" />
              <path d="M2 12c4-7 13-7 17 0-5 7-13 7-17 0z" fill="#6a9a10" stroke="#2b4a0a" />
              <path d="M6 12c3-4 7-4 10 0-3 4-7 4-10 0z" fill="#86b81e" stroke="#2b4a0a" />
            </svg>
          </li>
          <li><Penguin /></li>
          <li><Penguin /></li>
          <li><Ico><path d="M8 7h15v11H8zM3 1v4M7 1v4M1 5h8v3q0 3-4 3T1 8zM5 11v7h3" /><path d="M10 9h11v7H10z" fill="#fff" /></Ico></li>
          <li>
            <svg width="18" height="24" viewBox="0 0 18 24" aria-hidden="true">
              <rect width="18" height="24" rx="9" fill="#0a78e0" />
              <path d="M4.500 8l9 8-4.500 4V4l4.500 4-9 8" fill="none" stroke="#fff" strokeWidth="1.400" />
            </svg>
          </li>
          <li><Ico w={18} h={24} sw={1.200}><path d="M3 7V1h9v6M1 7h13v9M9 23H1V7M5 3h1M9 3h1M9 19l3 4 5-6" /></Ico></li>
          <li>
            <svg width="24" height="24" viewBox="0 0 24 24" aria-hidden="true">
              <circle cx="12" cy="12" r="12" fill="#f6c915" />
              <path d="M12 0a12 12 0 0 0-9 20C3 9 12 4 22 6a12 12 0 0 0-10-6z" fill="#2ea83a" />
              <circle cx="12" cy="12" r="8" fill="#f9d82c" />
              <path d="M12 7v10M7 12h10" stroke="#1c9232" strokeWidth="3" />
            </svg>
          </li>
          <li><Ico w={22} h={20} sw={1.200}><path d="M1 7h4l5-6v18l-5-6H1zM13 7q2 3 0 6M16 4q4 6 0 12" /><path d="M19 2q5 8 0 16" opacity=".5" /></Ico></li>
          <li className="text-[19px]">中</li>
          <li className="ml-[5px]">
            <svg width="24" height="24" viewBox="0 0 24 24" aria-hidden="true">
              <rect width="24" height="24" rx="3" fill="#2f86fb" />
              <circle cx="12" cy="11" r="6" fill="none" stroke="#fff" strokeWidth="2.500" />
              <path d="M12 13l4 5" stroke="#fff" strokeWidth="2" /><circle cx="19" cy="20" r="1.500" fill="#8be04e" />
            </svg>
          </li>
        </ul>
        <button className="flex w-[132px] flex-col items-center justify-center pr-1 text-[18px] leading-6">
          <span>18:19 周二</span>
          <span>2022/9/13</span>
        </button>
        <button aria-label="通知" className="relative w-[53px]">
          <svg width="24" height="22" viewBox="0 0 24 22" className="ml-2" aria-hidden="true">
            <path d="M0 0h24v22H0z" fill="#fff" />
            <path d="M9 6l6 3v3l-6 4z" fill="#111" />
          </svg>
          <span className="absolute bottom-2.5 right-2 flex size-5 items-center justify-center bg-[#e20606] text-[13px]">9</span>
        </button>
        <div className="w-2 border-l border-[#777]" />
      </div>
    </footer>
  );
}

function SpeedBall() {
  return (
    <div className="absolute right-0 top-[172px] flex h-[91px] items-center text-white">
      <div className="flex h-[63px] w-[130px] flex-col justify-center rounded-l-full bg-[#343644] pl-4 text-[17px] leading-8 shadow-md">
        <span className="flex w-[68px] items-center justify-between whitespace-nowrap font-semibold">
          <Ico w={10} h={10} sw={2} className="text-[#35a5e8]"><path d="M5 10V1M1 5l4-4 4 4" /></Ico>
          <span>0<span className="text-[15px] font-normal text-[#9c9ea8]">K/s</span></span>
        </span>
        <span className="flex w-[68px] items-center justify-between whitespace-nowrap font-semibold">
          <Ico w={10} h={10} sw={2} className="text-[#2fb344]"><path d="M5 0v9M1 5l4 4 4-4" /></Ico>
          <span>0.3<span className="text-[15px] font-normal text-[#9c9ea8]">K/s</span></span>
        </span>
      </div>
      <div className="relative -ml-10 mr-px flex size-[89px] items-center justify-center rounded-full bg-[#50525f] shadow-md">
        <svg width="89" height="89" viewBox="0 0 89 89" className="absolute inset-0" fill="none" strokeWidth="3" aria-hidden="true">
          <defs>
            <linearGradient id="gauge" x1="0" y1="0" x2="0" y2="1">
              <stop offset="0" stopColor="#35c9b0" />
              <stop offset=".6" stopColor="#6fc77a" />
              <stop offset="1" stopColor="#c9d32c" />
            </linearGradient>
          </defs>
          <path d="M44 7a37.500 37.500 0 1 1-25 66" stroke="url(#gauge)" />
        </svg>
        <span className="text-[36px] font-light">61<span className="text-[16px] font-normal">%</span></span>
      </div>
    </div>
  );
}

export default function App() {
  return (
    <div className="relative flex h-screen w-full flex-col overflow-hidden bg-[#f4f6f9] font-['Noto_Sans','Noto_Sans_CJK_SC',sans-serif] text-[18px] leading-normal text-[#2b2d35]">
      <TitleBar />
      <MenuBar />
      <Ribbon />
      <main className="flex min-h-0 flex-1">
        <div className="relative flex min-w-0 flex-1 flex-col">
          <Ruler />
          <Documents />
          <Ico w={8} h={8} sw={1} className="absolute left-1 top-2.5 text-[#9a9da5]"><path d="M.5 0v7.500H6" /></Ico>
          <div className="absolute bottom-0 left-0 h-[163px] w-[7px] border-t border-[#a5a8b0] bg-[#e7e9ee]" />
        </div>
        <ScrollRail />
        <SideBar />
      </main>
      <StatusBar />
      <TaskBar />
      <SpeedBall />
      <div className="absolute left-[3px] top-[9px] flex h-[86px] w-3 flex-col rounded-md border border-[#555] bg-[linear-gradient(#22335f_42%,#5c5c5c_42%)] px-0.5 pb-[3px]">
        <div className="mt-auto h-3 bg-[repeating-linear-gradient(#5fd06f_0_1px,transparent_1px_3px)]" />
      </div>
      <svg width="14" height="20" viewBox="0 0 14 20" className="absolute right-[67px] top-[508px]" aria-hidden="true">
        <path d="M1 1v15l3.500-3 2.500 5 3-1-2.500-5H12z" fill="#fff" stroke="#000" strokeWidth="1.200" />
      </svg>
    </div>
  );
}
